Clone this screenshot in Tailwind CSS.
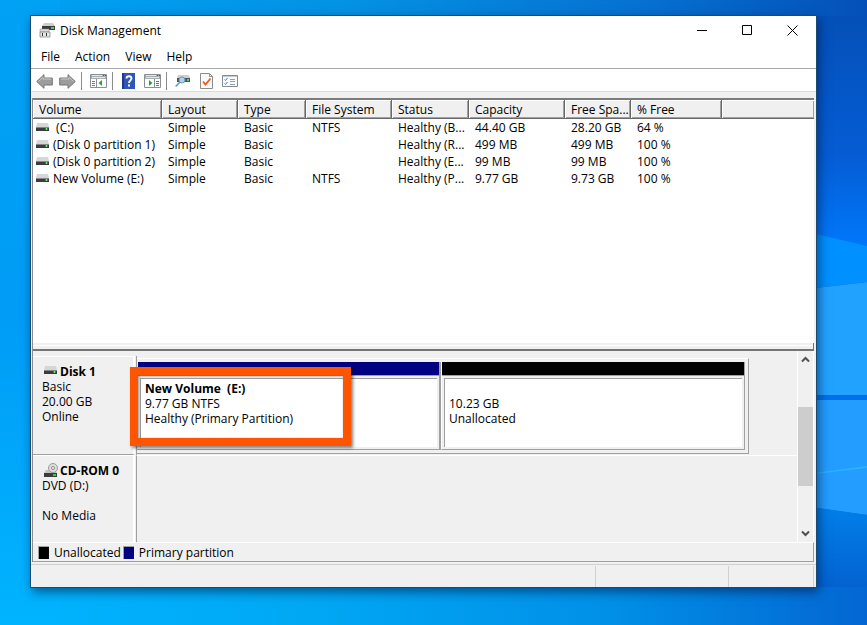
<!DOCTYPE html>
<html lang="en">
<head>
    <meta charset="UTF-8">
    <meta name="viewport" content="width=device-width, initial-scale=1.0">
    <title>Disk Management</title>
    <script src="https://cdn.jsdelivr.net/npm/@tailwindcss/browser@4"></script>
</head>
<body class="relative flex min-h-screen bg-[#0a8ae6] pt-[15px] pr-[50px] pb-[37px] pl-[30px] font-['Open_Sans','Noto_Sans',sans-serif] text-[12px] leading-[15px] text-black">

    <!-- Shared icons -->
    <svg class="hidden">
        <symbol id="icon-disk" viewBox="0 0 13 8">
            <path d="M1 0h11l1 4H0z" fill="#d6d6d6"/>
            <path d="M0 4h13v4H0z" fill="#3a3c3e"/>
            <path d="M0 4h13v1H0z" fill="#85878a"/>
            <path d="M9 5h3v2H9z" fill="#1f8f2c"/>
            <path d="M10 5h1v2h-1z" fill="#4dff5a"/>
        </symbol>
        <symbol id="icon-arrow" viewBox="0 0 17 15">
            <path d="M.7 7.500L8 .7v3.300h8.300v7H8v3.300z" fill="#9c9c9c" stroke="#777" stroke-linejoin="round"/>
            <path d="M2.500 7.500L7 3.300V5h8.300" fill="none" stroke="#c8c8c8"/>
        </symbol>
        <symbol id="icon-pane" viewBox="0 0 17 14">
            <path d="M.5.5h16v13H.5z" fill="#fff" stroke="#8a8f94"/>
            <path d="M1 1h15v4H1z" fill="#a9aeb3"/>
            <path d="M2 1.500h10M2 3.500h13" stroke="#e3e6e9"/>
            <path d="M13 1.500h1M15 1.500h1" stroke="#555"/>
        </symbol>
    </svg>

    <!-- Wallpaper -->
    <svg class="absolute inset-0 h-full w-full" viewBox="0 0 867 625" preserveAspectRatio="none" aria-hidden="true">
        <defs>
            <linearGradient id="top" x1="0" x2="1" y1="0" y2="0">
                <stop offset="0" stop-color="#00a2f4"/>
                <stop offset=".4" stop-color="#0492e4"/>
                <stop offset=".75" stop-color="#0670d0"/>
                <stop offset="1" stop-color="#0450b8"/>
            </linearGradient>
            <linearGradient id="bottom" x1="0" x2="1" y1="0" y2="0">
                <stop offset="0" stop-color="#00b4ff"/>
                <stop offset=".35" stop-color="#00a8f4"/>
                <stop offset=".7" stop-color="#0090e8"/>
                <stop offset="1" stop-color="#0466d2"/>
            </linearGradient>
            <linearGradient id="left" x1="0" x2="0" y1="0" y2="1">
                <stop offset="0" stop-color="#00a2f4"/>
                <stop offset=".5" stop-color="#009cf6"/>
                <stop offset="1" stop-color="#00b4ff"/>
            </linearGradient>
            <linearGradient id="right" x1="0" x2="0" y1="0" y2="1">
                <stop offset="0" stop-color="#0450b8"/>
                <stop offset=".6" stop-color="#055cd4"/>
                <stop offset="1" stop-color="#0078fa"/>
            </linearGradient>
            <linearGradient id="corner" x1="0" x2="0" y1="0" y2="1">
                <stop offset="0" stop-color="#0080ea"/>
                <stop offset="1" stop-color="#0462d0"/>
            </linearGradient>
        </defs>
        <path d="M0 0h867v300H0z" fill="url(#top)"/>
        <path d="M0 300h867v325H0z" fill="url(#bottom)"/>
        <path d="M0 0h60v625H0z" fill="url(#left)"/>
        <path d="M790 16h77v230l-77-14z" fill="url(#right)"/>
        <path d="M790 228l77 18v36l-77 9z" fill="#0090ff"/>
        <path d="M790 291l77-9v114h-77z" fill="#22a2ff"/>
        <path d="M790 395h77v5h-77z" fill="#0070ea"/>
        <path d="M790 400h77v115l-77-11z" fill="#239dff"/>
        <path d="M790 476l77-10v2l-77 9z" fill="#2bb2ff"/>
        <path d="M790 504l77 11v72h-77z" fill="url(#corner)"/>
    </svg>

    <main class="relative flex flex-1 flex-col border border-[#1a4a70] bg-[#f0f0f0] shadow-[2px_4px_10px_rgba(0,20,60,0.55)]">
        <!-- Title bar -->
        <header class="flex h-[30px] items-center bg-white pr-px pb-[2px] pl-2">
            <svg class="h-4 w-4" viewBox="0 0 16 16">
                <path d="M5 1h9l2 3H3z" fill="#cfcfcf"/>
                <path d="M3 4h13v4H3z" fill="#3a3c3e"/>
                <path d="M12 5h3v2h-3z" fill="#3be04a"/>
                <path d="M1 7h9v3H1z" fill="#ddd" stroke="#888" stroke-width=".5"/>
                <path d="M1 10h10v5H1z" fill="#e8e8e8" stroke="#777" stroke-width=".7"/>
                <path d="M3 11h1v3H3zM7 11h1v3H7z" fill="#333"/>
            </svg>
            <h1 class="ml-[5px] flex-1">Disk Management</h1>
            <button aria-label="Minimize" class="flex h-full w-[45px] items-center justify-center"><svg class="h-[11px] w-[11px]" viewBox="0 0 11 11"><path d="M0 5.500h10" stroke="#000"/></svg></button>
            <button aria-label="Maximize" class="flex h-full w-[45px] items-center justify-center"><svg class="h-[11px] w-[11px]" viewBox="0 0 11 11"><path d="M.5.5h9v9h-9z" fill="none" stroke="#000"/></svg></button>
            <button aria-label="Close" class="flex h-full w-[45px] items-center justify-center"><svg class="h-[11px] w-[11px]" viewBox="0 0 11 11"><path d="M.5.5l10 10M10.500.5l-10 10" fill="none" stroke="#000"/></svg></button>
        </header>

        <!-- Menu -->
        <nav class="flex h-[23px] items-center gap-[15px] border-b border-[#a8a8a8] bg-white pb-px pl-[10px]">
            <button>File</button>
            <button>Action</button>
            <button>View</button>
            <button>Help</button>
        </nav>

        <!-- Toolbar -->
        <div class="flex h-[23px] items-center border-b border-[#dcdcdc] bg-white pt-[2px] pl-[5px]">
            <button aria-label="Back"><svg class="h-[15px] w-[17px]"><use href="#icon-arrow"/></svg></button>
            <button aria-label="Forward" class="ml-[6px]"><svg class="h-[15px] w-[17px] -scale-x-100"><use href="#icon-arrow"/></svg></button>
            <div class="ml-[5px] h-[18px] w-px bg-[#8d8d8d]"></div>
            <button aria-label="Show or hide console tree" class="ml-2">
                <svg class="h-[14px] w-[17px]" viewBox="0 0 17 14">
                    <use href="#icon-pane"/>
                    <path d="M6.500 5v8" stroke="#8a8f94"/>
                    <path d="M2 7.500h3M2 9.500h3M2 11.500h3" stroke="#5a7fb0"/>
                    <path d="M12 6v6L8.500 9z" fill="#1fa832"/>
                </svg>
            </button>
            <div class="ml-[5px] h-[18px] w-px bg-[#8d8d8d]"></div>
            <button aria-label="Help" class="ml-[9px]">
                <svg class="h-4 w-[13px]" viewBox="0 0 13 16">
                    <path d="M0 0h13v16H0z" fill="#2f57b8"/>
                    <path d="M0 0h2v16H0z" fill="#1d3c8c"/>
                    <path d="M4.500 5.500c0-3 5-3 5 0 0 2-2.500 2-2.500 4.500" fill="none" stroke="#fff" stroke-width="1.800"/>
                    <path d="M6 11.500h2v2H6z" fill="#fff"/>
                </svg>
            </button>
            <button aria-label="Show or hide action pane" class="ml-[9px]">
                <svg class="h-[14px] w-[17px]" viewBox="0 0 17 14">
                    <use href="#icon-pane"/>
                    <path d="M10.500 5v8" stroke="#8a8f94"/>
                    <path d="M12 7.500h3M12 9.500h3M12 11.500h3" stroke="#3f78d0"/>
                    <path d="M5 6v6l3.500-3z" fill="#1fa832"/>
                </svg>
            </button>
            <div class="ml-[5px] h-[18px] w-px bg-[#8d8d8d]"></div>
            <button aria-label="Refresh disk view" class="ml-2">
                <svg class="h-[14px] w-[16px]" viewBox="0 0 16 14">
                    <path d="M3 1h11l1 3H2z" fill="#cfcfcf"/>
                    <path d="M2 4h13v4H2z" fill="#505254"/>
                    <path d="M12 5h2v2h-2z" fill="#3be04a"/>
                    <circle cx="7" cy="6" r="3" fill="#a9d4f5" stroke="#7592aa"/>
                    <path d="M4.800 8.200L.7 12.500" stroke="#6a93bd" stroke-width="1.600"/>
                </svg>
            </button>
            <button aria-label="Properties" class="ml-[9px]">
                <svg class="h-4 w-[13px]" viewBox="0 0 13 16">
                    <path d="M.5.5h9l3 3v12H.5z" fill="#fafafa" stroke="#8c8c8c"/>
                    <path d="M9.500.5v3h3" fill="none" stroke="#8c8c8c"/>
                    <path d="M3 8.500l2.500 3 5-6" fill="none" stroke="#ee5a1c" stroke-width="1.800"/>
                </svg>
            </button>
            <button aria-label="Settings" class="ml-[9px]">
                <svg class="h-[13px] w-4" viewBox="0 0 16 13">
                    <path d="M.5.5h15v11H.5z" fill="#f8fafc" stroke="#858b91"/>
                    <path d="M1 1h14v1H1z" fill="#c7ccd1"/>
                    <path d="M2.500 4.500l1 1 2-2.500M2.500 8.500l1 1 2-2.500" fill="none" stroke="#2f7fd8"/>
                    <path d="M8 4.500h5M8 6.500h5M8 9.500h5" stroke="#8fa0b0"/>
                </svg>
            </button>
        </div>

        <div class="mr-[2px] ml-px mt-[6px] flex flex-1 flex-col border-l border-[#8c8c8c]">
            <!-- Volume list -->
            <section class="flex-1 border-t-2 border-[#7c7c7c] bg-white">
                <table class="w-full table-fixed border-separate border-spacing-0 text-left">
                    <colgroup>
                        <col class="w-[129px]"><col class="w-[76px]"><col class="w-[68px]"><col class="w-[86px]"><col class="w-[77px]"><col class="w-[96px]"><col class="w-[66px]"><col class="w-[91px]"><col>
                    </colgroup>
                    <thead>
                        <tr class="h-[19px] bg-[#f0f0f0] *:border-r *:border-b *:border-[#696969] *:pl-[6px] *:font-normal *:whitespace-nowrap *:shadow-[inset_1px_1px_#fff,inset_-1px_-1px_#a0a0a0]">
                            <th>Volume</th><th>Layout</th><th>Type</th><th>File System</th><th>Status</th><th>Capacity</th><th>Free Spa...</th><th>% Free</th><th class="border-r-0!"></th>
                        </tr>
                    </thead>
                    <tbody class="*:h-[17px] [&_td]:pl-[6px] [&_td]:whitespace-nowrap">
                        <tr>
                            <td class="pl-[3px]!"><svg class="mr-1 inline h-2 w-[13px] align-[1px]"><use href="#icon-disk"/></svg>&nbsp;(C:)</td>
                            <td>Simple</td><td>Basic</td><td>NTFS</td><td>Healthy (B...</td><td>44.40 GB</td><td>28.20 GB</td><td>64 %</td><td></td>
                        </tr>
                        <tr>
                            <td class="pl-[3px]!"><svg class="mr-1 inline h-2 w-[13px] align-[1px]"><use href="#icon-disk"/></svg>(Disk 0 partition 1)</td>
                            <td>Simple</td><td>Basic</td><td></td><td>Healthy (R...</td><td>499 MB</td><td>499 MB</td><td>100 %</td><td></td>
                        </tr>
                        <tr>
                            <td class="pl-[3px]!"><svg class="mr-1 inline h-2 w-[13px] align-[1px]"><use href="#icon-disk"/></svg>(Disk 0 partition 2)</td>
                            <td>Simple</td><td>Basic</td><td></td><td>Healthy (E...</td><td>99 MB</td><td>99 MB</td><td>100 %</td><td></td>
                        </tr>
                        <tr>
                            <td class="pl-[3px]!"><svg class="mr-1 inline h-2 w-[13px] align-[1px]"><use href="#icon-disk"/></svg>New Volume (E:)</td>
                            <td>Simple</td><td>Basic</td><td>NTFS</td><td>Healthy (P...</td><td>9.77 GB</td><td>9.73 GB</td><td>100 %</td><td></td>
                        </tr>
                    </tbody>
                </table>
            </section>

            <!-- Splitter -->
            <div class="h-2 border-r border-b-2 border-[#757575] bg-[#f0f0f0] shadow-[inset_0_-3px_#f0f0f0,inset_0_-4px_#fff]"></div>

            <!-- Disk map -->
            <section class="flex">
                <div class="flex-1 pt-[5px]">
                    <div class="flex h-[99px]">
                        <div class="w-[102px] border-t border-r-2 border-b border-t-white border-r-white border-b-[#a0a0a0] pt-[7px] pl-[9px]">
                            <h2 class="flex items-center gap-[3px] pl-[2px] font-bold"><svg class="mb-1 h-2 w-[13px]"><use href="#icon-disk"/></svg>Disk 1</h2>
                            <p>Basic</p>
                            <p>20.00 GB</p>
                            <p>Online</p>
                        </div>
                        <div class="relative ml-px flex-1 border-l border-[#a0a0a0] pr-[48px]">
                            <div class="mt-[2px] h-[96px] border-t border-r border-b border-t-white border-r-[#a0a0a0] border-b-[#a0a0a0] pt-[3px] pr-[3px] pb-[3px]">
                                <div class="flex h-full">
                                    <!-- Primary partition -->
                                    <div class="flex w-1/2 flex-col border-r-2 border-b border-[#a0a0a0] pl-px">
                                        <div class="h-[14px] border-b border-[#a0a0a0] bg-[#000080]"></div>
                                        <div class="m-[2px] flex-1 border-t border-l border-[#a0a0a0] bg-white pt-[2px] pl-[4px]">
                                            <p class="font-bold whitespace-pre">New Volume  (E:)</p>
                                            <p>9.77 GB NTFS</p>
                                            <p>Healthy (Primary Partition)</p>
                                        </div>
                                    </div>
                                    <!-- Unallocated space -->
                                    <div class="flex w-1/2 flex-col border-r border-b border-l border-[#a0a0a0] border-l-white">
                                        <div class="h-[14px] border-b border-[#a0a0a0] bg-black"></div>
                                        <div class="m-[2px] flex-1 border-t border-l border-[#a0a0a0] bg-white pt-[17px] pl-[4px]">
                                            <p>10.23 GB</p>
                                            <p>Unallocated</p>
                                        </div>
                                    </div>
                                </div>
                            </div>
                            <!-- Highlight frame -->
                            <div class="absolute top-[11px] left-[-7px] h-[79px] w-[221px] border-8 border-[#ff5500] shadow-[2px_2px_3px_rgba(0,0,0,0.5),inset_1px_1px_3px_rgba(0,0,0,0.4)]"></div>
                        </div>
                    </div>
                    <div class="flex h-[87px]">
                        <div class="w-[102px] border-t border-r-2 border-white pt-[7px] pl-[9px]">
                            <h2 class="flex items-end gap-[2px] pl-[2px] font-bold">
                                <svg class="h-[15px] w-[14px]" viewBox="0 0 14 15">
                                    <path d="M2 7h9l2 3H0z" fill="#c4c4c4"/>
                                    <path d="M0 10h13v4H0z" fill="#3a3c3e"/>
                                    <path d="M9 11h3v2H9z" fill="#2fd03e"/>
                                    <circle cx="9" cy="5" r="4.500" fill="#dedede" stroke="#9b9b9b"/>
                                    <circle cx="9" cy="5" r="1.500" fill="#fff" stroke="#8a8a8a"/>
                                </svg>CD-ROM 0</h2>
                            <p>DVD (D:)</p>
                            <p class="mt-[15px]">No Media</p>
                        </div>
                        <div class="ml-px flex-1 border-t border-l border-t-white border-l-[#a0a0a0]"></div>
                    </div>
                </div>
                <!-- Scroll bar -->
                <div class="flex w-[17px] flex-col border-r border-l border-white">
                    <button aria-label="Scroll up" class="flex h-[17px] items-center justify-center"><svg class="h-[7px] w-[9px]" viewBox="0 0 9 7"><path d="M1 5.500L4.500 2 8 5.500" fill="none" stroke="#505050" stroke-width="2"/></svg></button>
                    <div class="flex-1 pt-[39px]"><div class="h-[79px] bg-[#cdcdcd]"></div></div>
                    <button aria-label="Scroll down" class="flex h-[17px] items-center justify-center"><svg class="h-[7px] w-[9px]" viewBox="0 0 9 7"><path d="M1 1.500L4.500 5 8 1.500" fill="none" stroke="#505050" stroke-width="2"/></svg></button>
                </div>
            </section>

            <!-- Legend -->
            <footer class="flex h-5 items-center border-t border-r border-b border-t-white border-r-[#a0a0a0] border-b-[#a0a0a0] pl-[5px]">
                <span class="mr-[5px] h-[13px] w-[11px] border-t border-l border-[#a0a0a0] bg-black"></span>Unallocated
                <span class="mr-[5px] ml-[2px] h-[13px] w-[11px] border-t border-l border-[#a0a0a0] bg-[#000080]"></span>Primary partition
            </footer>
        </div>

        <!-- Status bar -->
        <div class="mt-[2px] flex h-[23px] border-t border-[#d0d0d0] pt-px pr-[2px]">
            <div class="flex-1 border-r border-[#d0d0d0]"></div>
            <div class="w-[133px] border-r border-[#d0d0d0]"></div>
            <div class="w-[85px] border-r border-[#d0d0d0]"></div>
        </div>
    </main>
</body>
</html>
